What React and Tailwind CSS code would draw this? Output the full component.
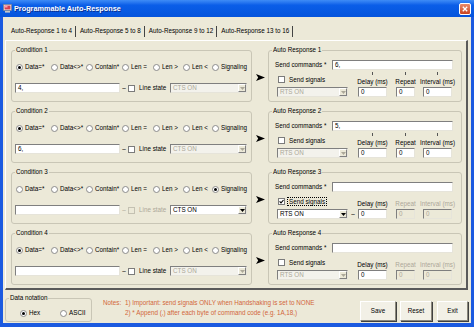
import React from "react";

const DIS = "text-[#aca899]";
const SUNK =
  "border border-t-[#7f7f7f] border-l-[#7f7f7f] border-r-[#e6e4da] border-b-[#e6e4da]";

const LABELS = ["Data=*", "Data<>*", "Contain*", "Len =", "Len >", "Len <", "Signaling"];
const RADIO_W = ["w-[35px]", "w-[35px]", "w-[36px]", "w-[31px]", "w-[30px]", "w-[29px]", ""];

function Radio({ checked, label, className = "" }) {
  return (
    <div className={`flex items-center gap-[2px] shrink-0 ${className}`}>
      <span className="w-[7px] h-[7px] rounded-full border border-[#8b8b8b] bg-white flex items-center justify-center shrink-0">
        {checked && <span className="w-[3px] h-[3px] rounded-full bg-black" />}
      </span>
      <span className="whitespace-nowrap">{label}</span>
    </div>
  );
}

function Check({ checked, disabled }) {
  return (
    <span
      className={`w-[7px] h-[7px] border shrink-0 flex items-center justify-center ${
        disabled ? "border-[#c4c1b2] bg-[#ece9d8]" : "border-[#7b7b7b] bg-white"
      }`}
    >
      {checked && (
        <svg width="5" height="5" viewBox="0 0 5 5">
          <path d="M0.6 2.4 L2 3.9 L4.5 1" stroke="#000" strokeWidth="1.1" fill="none" />
        </svg>
      )}
    </span>
  );
}

function TextBox({ value = "", disabled, className = "" }) {
  return (
    <div
      className={`h-[10px] ${SUNK} flex items-center pl-[2px] ${
        disabled ? "bg-[#ece9d8] text-[#aca899]" : "bg-white text-black"
      } ${className}`}
    >
      {value}
    </div>
  );
}

function Combo({ value, disabled, className = "" }) {
  return (
    <div
      className={`h-[10px] ${SUNK} flex ${
        disabled ? "bg-[#f3f2ec] text-[#aca899]" : "bg-white text-black"
      } ${className}`}
    >
      <span className="flex-1 flex items-center pl-[2px]">{value}</span>
      <span className="w-[8px] bg-[#ece9d8] border border-t-white border-l-white border-r-[#808080] border-b-[#808080] flex items-center justify-center">
        <svg width="5" height="3" viewBox="0 0 5 3">
          <path d="M0 0H5L2.5 3Z" fill={disabled ? "#aca899" : "#000"} />
        </svg>
      </span>
    </div>
  );
}

function Field({ label, on, tick, className = "" }) {
  return (
    <div className={`flex flex-col items-center ${className}`}>
      <span className={`w-px h-[3px] ${tick ? "bg-[#555]" : ""}`} />
      <span className={`mt-[3px] h-[8px] leading-[8px] whitespace-nowrap ${on ? "" : DIS}`}>{label}</span>
      <TextBox value="0" disabled={!on} className="mt-[1px] w-full" />
    </div>
  );
}

function Condition({ n, sel, value }) {
  const sig = sel === 6;
  return (
    <fieldset className="w-[241px] shrink-0 border border-[#c9c6b6] rounded-[3px]">
      <legend className="ml-[3px] px-[1px] leading-[8px]">Condition {n}</legend>
      <div className="pt-[9px] pb-[8px] pl-[3px] pr-[4px]">
        <div className="flex items-center h-[8px] pl-[1px]">
          {LABELS.map((l, i) => (
            <Radio key={l} label={l} checked={i === sel} className={RADIO_W[i]} />
          ))}
        </div>
        <div className="flex items-center h-[10px] mt-[12px]">
          <TextBox value={value} className="w-[105px]" />
          <span className={`w-[8px] text-center ${sig ? DIS : ""}`}>–</span>
          <Check disabled={sig} />
          <span className={`ml-[4px] ${sig ? DIS : ""}`}>Line state</span>
          <Combo value="CTS ON" disabled={!sig} className="ml-auto w-[77px]" />
        </div>
      </div>
    </fieldset>
  );
}

function AutoResponse({ n, cmd, checked, focus, comboOn, ticks, restOn }) {
  return (
    <fieldset className="w-[194px] shrink-0 border border-[#c9c6b6] rounded-[3px]">
      <legend className="ml-[3px] px-[1px] leading-[8px]">Auto Response {n}</legend>
      <div className="pt-[6px] pb-[4px] pl-[6px] pr-[8px]">
        <div className="flex items-center h-[10px]">
          <span className="whitespace-nowrap">Send commands *</span>
          <TextBox value={cmd} className="ml-auto w-[121px]" />
        </div>
        <div className="flex items-end mt-[2px]">
          <div className="ml-[2px] w-[71px] shrink-0">
            <div className="flex items-center h-[8px] pl-[1px]">
              <Check checked={checked} />
              <span
                className={`ml-[3px] px-[1px] leading-[7px] whitespace-nowrap ${
                  focus ? "outline outline-1 outline-dotted outline-black" : ""
                }`}
              >
                Send signals
              </span>
            </div>
            <Combo value="RTS ON" disabled={!comboOn} className="mt-[4px]" />
          </div>
          <div className="w-[10px] h-[10px] shrink-0 flex items-center justify-center">
            {comboOn ? "–" : ""}
          </div>
          <Field label="Delay (ms)" on tick={ticks} className="w-[29px] shrink-0" />
          <Field label="Repeat" on={restOn} tick={ticks} className="ml-[9px] w-[19px] shrink-0" />
          <Field label="Interval (ms)" on={restOn} tick={ticks} className="ml-[8px] w-[29px] shrink-0" />
        </div>
      </div>
    </fieldset>
  );
}

function Arrow() {
  return (
    <svg width="9" height="7" viewBox="0 0 9 7">
      <path d="M0 0L9 3.5L0 7L2.2 3.5Z" fill="#000" />
    </svg>
  );
}

function Btn({ children, className = "" }) {
  return (
    <div
      className={`h-[20px] flex items-center justify-center bg-[#f2f0e6] border border-t-white border-l-white border-r-[#8a877a] border-b-[#8a877a] shadow-[1px_1px_0_#404040] ${className}`}
    >
      {children}
    </div>
  );
}

const conditions = [
  { sel: 0, value: "4," },
  { sel: 0, value: "6," },
  { sel: 6, value: "" },
  { sel: 0, value: "" },
];

const responses = [
  { cmd: "6,", checked: false, comboOn: false, ticks: true, restOn: true },
  { cmd: "5,", checked: false, comboOn: false, ticks: true, restOn: true },
  { cmd: "", checked: true, focus: true, comboOn: true, ticks: false, restOn: false },
  { cmd: "", checked: false, comboOn: false, ticks: false, restOn: false },
];

const tabs = ["Auto-Response 1 to 4", "Auto-Response 5 to 8", "Auto-Response 9 to 12", "Auto-Response 13 to 16"];

export default function App() {
  return (
    <div className="w-[474px] h-[327px] bg-[#1b5ae0] flex flex-col font-['Liberation_Sans',Arial,sans-serif] text-[6.3px] text-black leading-none overflow-hidden">
      {/* title bar */}
      <div className="h-[17px] shrink-0 flex items-center bg-linear-to-b from-[#3e8cf6] via-[#0a5ee8] via-30% to-[#0554dc] px-[3px]">
        <svg width="9" height="9" viewBox="0 0 9 9">
          <rect x="0.5" y="0.5" width="8" height="6" fill="#f4f4f4" stroke="#7a7a7a" strokeWidth="0.6" />
          <rect x="1.5" y="1.5" width="6" height="4" fill="#d6404f" />
          <rect x="1.5" y="1.5" width="3" height="2" fill="#f7a0b0" />
          <rect x="2" y="7" width="5" height="1.6" fill="#c8c8c8" />
        </svg>
        <span className="ml-[2px] text-white font-bold text-[7.3px] [text-shadow:1px_1px_0_#0c2f8f]">
          Programmable Auto-Response
        </span>
        <div className="ml-auto w-[12px] h-[12px] rounded-[2px] border border-white bg-linear-to-b from-[#e98a68] to-[#c9431f] flex items-center justify-center">
          <svg width="6" height="6" viewBox="0 0 6 6">
            <path d="M0.8 0.8L5.2 5.2M5.2 0.8L0.8 5.2" stroke="#fff" strokeWidth="1.3" />
          </svg>
        </div>
      </div>

      {/* window body */}
      <div className="flex-1 mx-[3px] mb-[4px] bg-[#ece9d8] flex flex-col">
        <div className="h-[23px] shrink-0 pt-[9px] ml-[3px] flex">
          {tabs.map((t, i) => (
            <div
              key={t}
              className={`h-[11px] flex items-center border-r border-[#444] pr-[3px] whitespace-nowrap ${
                i === 0 ? "pl-[5px]" : "pl-[4px]"
              }`}
            >
              {t}
            </div>
          ))}
        </div>

        <div className="ml-[2px] mr-[3px] border-t border-l border-t-white border-l-white border-r-2 border-b-2 border-r-[#5a5a5a] border-b-[#5a5a5a] pl-[5px] pt-[5px] pb-[3px] flex flex-col gap-[5px]">
          {conditions.map((c, i) => (
            <div key={i} className="flex">
              <Condition n={i + 1} sel={c.sel} value={c.value} />
              <div className="w-[16px] shrink-0 flex justify-center pt-[28px]">
                <div>
                  <Arrow />
                </div>
              </div>
              <AutoResponse n={i + 1} {...responses[i]} />
            </div>
          ))}
        </div>

        <div className="flex items-start flex-1">
          <fieldset className="ml-[2px] mt-[4px] w-[87px] shrink-0 border border-[#c9c6b6] rounded-[3px]">
            <legend className="ml-[3px] px-[1px] leading-[8px]">Data notation</legend>
            <div className="flex items-center h-[8px] mt-[7px] mb-[4px] pl-[14px]">
              <Radio checked label="Hex" className="w-[40px]" />
              <Radio label="ASCII" />
            </div>
          </fieldset>
          <div className="ml-[11px] mt-[8px] text-[#d2663a] leading-[10px] flex whitespace-nowrap">
            <span className="w-[22px]">Notes:</span>
            <div>
              <div>1) Important: send signals ONLY when Handshaking is set to NONE</div>
              <div>2) * Append (,) after each byte of command code (e.g. 1A,18,)</div>
            </div>
          </div>
          <div className="ml-auto mr-[3px] mt-[11px] flex">
            <Btn className="w-[36px]">Save</Btn>
            <Btn className="ml-[4px] w-[32px]">Reset</Btn>
            <Btn className="ml-[5px] w-[31px]">Exit</Btn>
          </div>
        </div>
      </div>
    </div>
  );
}
